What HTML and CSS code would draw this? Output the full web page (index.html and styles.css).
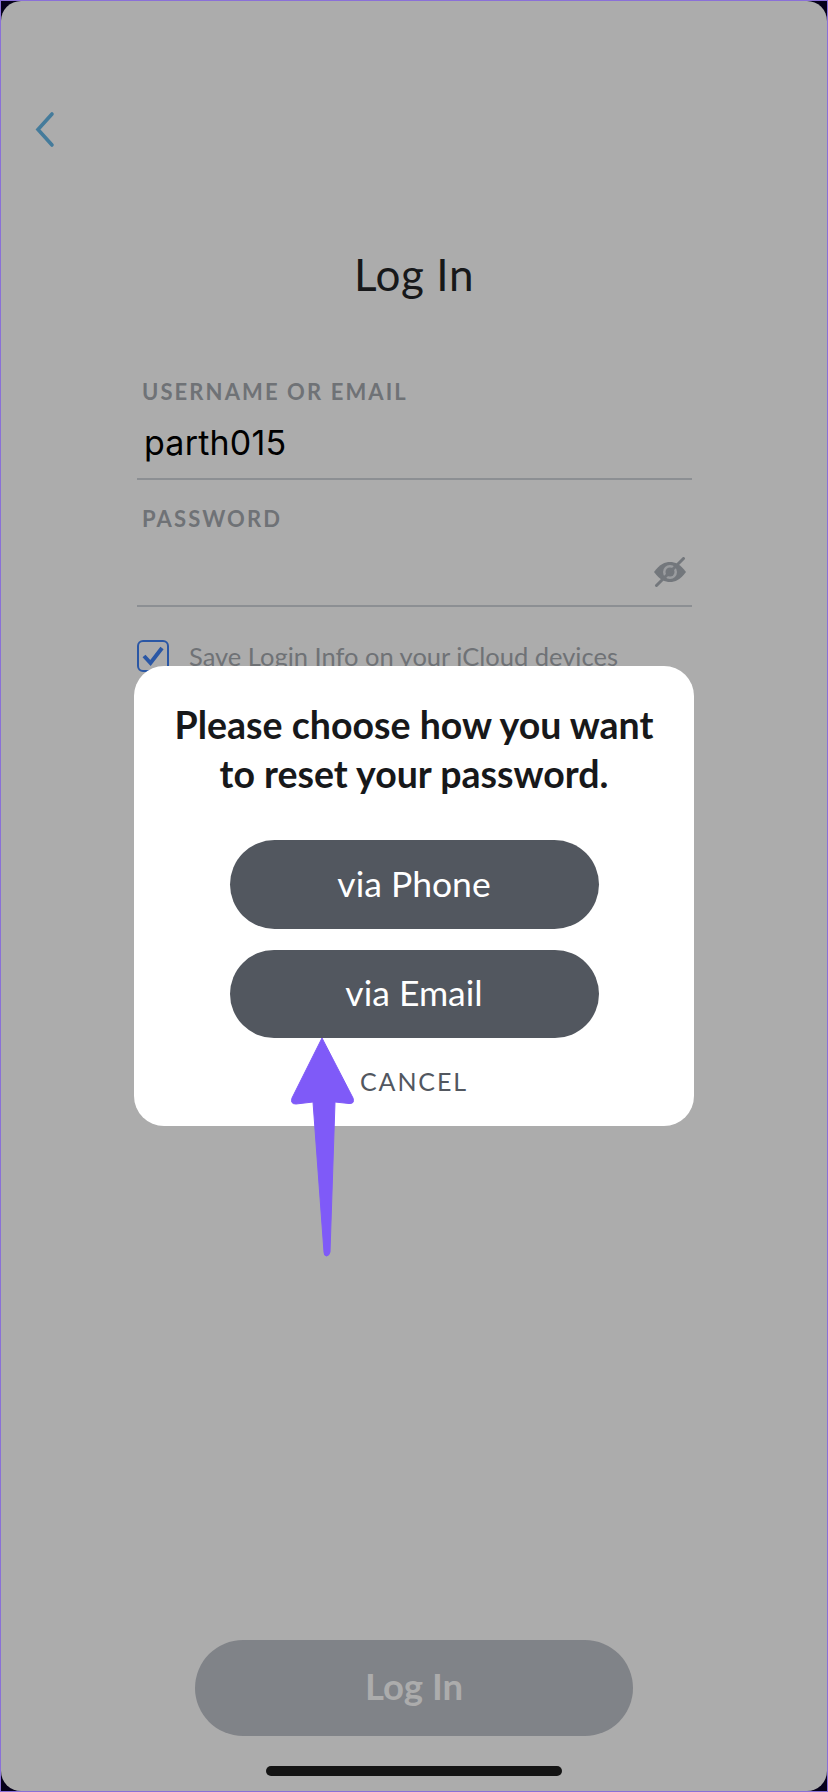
FILE: index.html
```html
<!DOCTYPE html>
<html lang="en">
<head>
    <meta charset="UTF-8">
    <meta name="viewport" content="width=device-width, initial-scale=1.0">
    <title>Log In</title>
    <link rel="stylesheet" href="styles.css">
</head>
<body>
    <div class="frame">
        <div class="screen">
            <button class="back-button" aria-label="Back">
                <svg width="24" height="40" viewBox="0 0 24 40"><path d="M19 3 L5 18.500 L19 34" fill="none" stroke="#447b9b" stroke-width="3.600" stroke-linecap="round" stroke-linejoin="miter"/></svg>
            </button>
            <h1 class="title">Log In</h1>
            <div class="form">
                <div class="field">
                    <label class="field-label">USERNAME OR EMAIL</label>
                    <div class="field-value">parth015</div>
                </div>
                <div class="field field-password">
                    <label class="field-label">PASSWORD</label>
                    <div class="field-value">
                        <svg class="eye" width="34" height="30" viewBox="0 0 34 30">
                            <path d="M1 15 C7 7 12 5 17 5 C22 5 27 7 33 15 C27 23 22 25 17 25 C12 25 7 23 1 15 Z" fill="#73777c"/>
                            <circle cx="17" cy="15" r="7" fill="#9a9c9f"/>
                            <circle cx="17" cy="15" r="4.500" fill="#73777c"/>
                            <path d="M3.500 28.500 L30.500 1.500" stroke="#73777c" stroke-width="3" stroke-linecap="round"/>
                        </svg>
                    </div>
                </div>
                <div class="save-row">
                    <span class="checkbox">
                        <svg width="24" height="22" viewBox="0 0 24 22"><path d="M3 11 L9.500 18 L21 3" fill="none" stroke="#2a57a5" stroke-width="4"/></svg>
                    </span>
                    <span class="save-text">Save Login Info on your iCloud devices</span>
                </div>
            </div>
            <div class="footer">
                <button class="login-button">Log In</button>
                <div class="home-bar"></div>
            </div>

            <div class="modal">
                <p class="modal-title">Please choose how you want to reset your password.</p>
                <button class="modal-button">via Phone</button>
                <button class="modal-button">via Email</button>
                <button class="cancel-button">CANCEL</button>
            </div>

            <svg class="arrow" width="80" height="226" viewBox="0 0 80 226">
                <path d="M33 4 L64 64 Q66 70 60 69.500 L46 68 L41 218 Q40 222 37.500 222 Q35 222 35 218 L24 68 L7 70 Q1 70 3 64 Z" fill="#7f5af8" stroke="#7f5af8" stroke-width="1" stroke-linejoin="round"/>
            </svg>
        </div>
    </div>
</body>
</html>
```

FILE: styles.css
```css
html, body {
    margin: 0;
    padding: 0;
    height: 100%;
}
body {
    font-family: Lato, 'Open Sans', sans-serif;
    background-color: #000;
    overflow: hidden;
}
button {
    font-family: inherit;
    border: none;
    padding: 0;
    background: none;
}
.frame {
    height: 100%;
    box-sizing: border-box;
    border: 1px solid #8a70d8;
    background-color: #05001a;
}
.screen {
    position: relative;
    height: 100%;
    box-sizing: border-box;
    display: flex;
    flex-direction: column;
    padding-top: 110px;
    background-color: #acacac;
    border-radius: 20px;
}
.back-button {
    align-self: flex-start;
    display: flex;
    margin-left: 32px;
    height: 40px;
}
.title {
    margin: 97px 0 0;
    font-size: 44px;
    line-height: 52px;
    font-weight: 400;
    letter-spacing: 0.6px;
    text-align: center;
    color: #17181a;
}
.form {
    width: 555px;
    margin: 78px auto 0 136px;
}
.field-label {
    display: block;
    padding-left: 5px;
    font-size: 22px;
    line-height: 28px;
    font-weight: 700;
    letter-spacing: 2.1px;
    color: #6f7276;
}
.field-value {
    height: 74px;
    box-sizing: border-box;
    display: flex;
    align-items: center;
    justify-content: space-between;
    padding: 0 7px;
    border-bottom: 2px solid #8c8f93;
    font-family: Inter, Roboto, sans-serif;
    font-size: 34px;
    letter-spacing: 0.2px;
    color: #000;
}
.field-password {
    margin-top: 25px;
}
.field-password .field-value {
    padding-top: 6px;
}
.eye {
    margin-left: auto;
    margin-right: -2px;
}
.save-row {
    display: flex;
    align-items: center;
    gap: 20px;
    margin-top: 33px;
}
.checkbox {
    width: 32px;
    height: 32px;
    box-sizing: border-box;
    display: flex;
    align-items: center;
    justify-content: center;
    border: 2px solid #2a57a5;
    border-radius: 6px;
}
.save-text {
    font-size: 25.5px;
    color: #6f7276;
}
.footer {
    margin-top: auto;
    display: flex;
    flex-direction: column;
    align-items: center;
    padding-bottom: 15px;
}
.login-button {
    width: 438px;
    height: 96px;
    padding-bottom: 4px;
    border-radius: 48px;
    background-color: #808388;
    color: #acacac;
    font-size: 36.5px;
    font-weight: 700;
}
.home-bar {
    width: 296px;
    height: 10px;
    margin-top: 30px;
    border-radius: 5px;
    background-color: #141414;
}
.modal {
    position: absolute;
    left: 133px;
    top: 665px;
    width: 560px;
    height: 460px;
    box-sizing: border-box;
    display: flex;
    flex-direction: column;
    align-items: center;
    padding-top: 34px;
    background-color: #fff;
    border-radius: 30px;
}
.modal-title {
    margin: 0 0 42px;
    width: 500px;
    font-size: 37.5px;
    line-height: 49px;
    font-weight: 700;
    text-align: center;
    color: #17181a;
}
.modal-button {
    width: 369px;
    height: 89px;
    margin-bottom: 21px;
    padding-bottom: 3px;
    border-radius: 45px;
    background-color: #52575f;
    color: #fff;
    font-size: 35.5px;
}
.modal-button + .modal-button {
    height: 88px;
}
.cancel-button {
    margin-top: 7px;
    font-size: 25px;
    letter-spacing: 1.9px;
    color: #52575f;
}
.arrow {
    position: absolute;
    left: 288px;
    top: 1033px;
}
```
